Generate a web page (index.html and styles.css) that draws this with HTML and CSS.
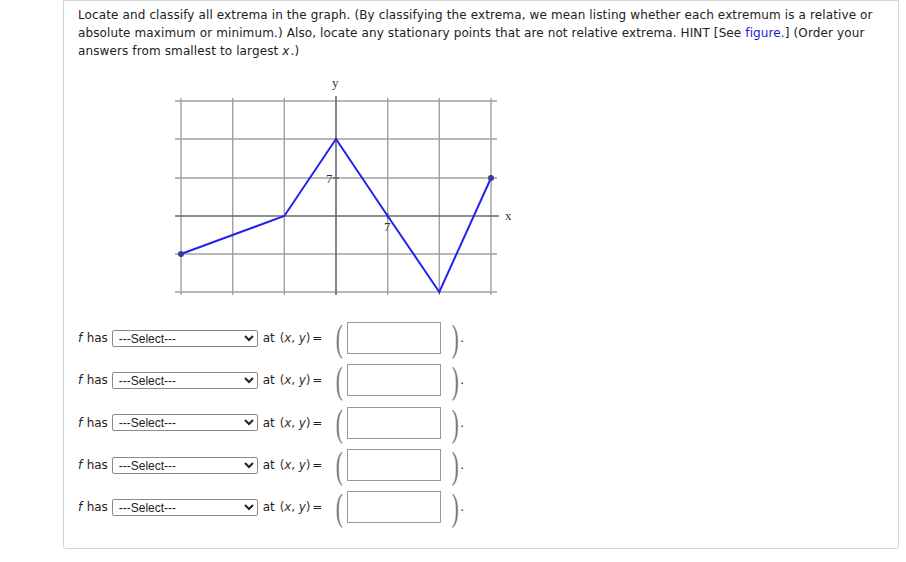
FILE: index.html
```html
<!DOCTYPE html>
<html lang="en">
<head>
    <meta charset="UTF-8">
    <title>Extrema</title>
    <link rel="stylesheet" href="styles.css">
</head>
<body>
    <div class="question">
        <p class="prompt">Locate and classify all extrema in the graph. (By classifying the extrema, we mean listing whether each extremum is a relative or absolute maximum or minimum.) Also, locate any stationary points that are not relative extrema. HINT [See <a href="#">figure.</a>] (Order your answers from smallest to largest <i>x</i>.)</p>

        <div class="graph">
            <svg width="360" height="226" viewBox="0 0 360 226">
                <g class="grid">
                    <line x1="21" y1="27" x2="21" y2="224"/>
                    <line x1="72.7" y1="27" x2="72.7" y2="224"/>
                    <line x1="124.3" y1="27" x2="124.3" y2="224"/>
                    <line x1="227.7" y1="27" x2="227.7" y2="224"/>
                    <line x1="279.3" y1="27" x2="279.3" y2="224"/>
                    <line x1="331" y1="27" x2="331" y2="224"/>
                    <line x1="15" y1="30" x2="337" y2="30"/>
                    <line x1="15" y1="68" x2="337" y2="68"/>
                    <line x1="15" y1="107" x2="337" y2="107"/>
                    <line x1="15" y1="183" x2="337" y2="183"/>
                    <line x1="15" y1="221" x2="337" y2="221"/>
                </g>
                <g class="axes">
                    <line x1="15" y1="145" x2="339" y2="145"/>
                    <line x1="176" y1="25" x2="176" y2="224"/>
                    <line x1="173" y1="107" x2="179" y2="107"/>
                    <line x1="227.7" y1="142" x2="227.7" y2="148"/>
                </g>
                <text class="axis-label" x="172" y="16">y</text>
                <text class="axis-label" x="345" y="149">x</text>
                <text class="tick" x="166" y="112">7</text>
                <text class="tick" x="224" y="160">7</text>
                <polyline class="curve" points="21,183 124.3,145 176,68 227.7,145 279.3,221 331,107"/>
                <circle class="end" cx="21" cy="183" r="3"/>
                <circle class="end" cx="331" cy="107" r="3"/>
            </svg>
        </div>

        <div class="answers">
            <div class="row">
                <span class="lead"><i>f</i> has</span>
                <select><option>---Select---</option></select>
                <span class="at">at</span>
                <span class="pair">(<i>x</i>, <i>y</i>)</span>
                <span class="eq">=</span>
                <span class="paren open">(</span>
                <input type="text">
                <span class="paren close">)</span>
                <span class="dot">.</span>
            </div>
            <div class="row">
                <span class="lead"><i>f</i> has</span>
                <select><option>---Select---</option></select>
                <span class="at">at</span>
                <span class="pair">(<i>x</i>, <i>y</i>)</span>
                <span class="eq">=</span>
                <span class="paren open">(</span>
                <input type="text">
                <span class="paren close">)</span>
                <span class="dot">.</span>
            </div>
            <div class="row">
                <span class="lead"><i>f</i> has</span>
                <select><option>---Select---</option></select>
                <span class="at">at</span>
                <span class="pair">(<i>x</i>, <i>y</i>)</span>
                <span class="eq">=</span>
                <span class="paren open">(</span>
                <input type="text">
                <span class="paren close">)</span>
                <span class="dot">.</span>
            </div>
            <div class="row">
                <span class="lead"><i>f</i> has</span>
                <select><option>---Select---</option></select>
                <span class="at">at</span>
                <span class="pair">(<i>x</i>, <i>y</i>)</span>
                <span class="eq">=</span>
                <span class="paren open">(</span>
                <input type="text">
                <span class="paren close">)</span>
                <span class="dot">.</span>
            </div>
            <div class="row">
                <span class="lead"><i>f</i> has</span>
                <select><option>---Select---</option></select>
                <span class="at">at</span>
                <span class="pair">(<i>x</i>, <i>y</i>)</span>
                <span class="eq">=</span>
                <span class="paren open">(</span>
                <input type="text">
                <span class="paren close">)</span>
                <span class="dot">.</span>
            </div>
        </div>
    </div>
</body>
</html>
```

FILE: styles.css
```css
body {
    margin: 0;
    background: #fff;
    font-family: "DejaVu Sans", Verdana, sans-serif;
    color: #222;
}
.question {
    margin-left: 63px;
    width: 836px;
    padding: 5px 0 19px 14px;
    box-sizing: border-box;
    border: 1px solid #d4d4d4;
    border-radius: 0 0 3px 3px;
    height: 549px;
}
.prompt {
    margin: 0;
    width: 805px;
    font-size: 12px;
    letter-spacing: 0.12px;
    line-height: 18px;
}
.prompt i {
    padding-right: 1px;
}
.prompt a {
    color: #1a1ad0;
    text-decoration: none;
}
.graph {
    margin: 11px 0 0 82px;
    height: 227px;
}
.graph svg {
    display: block;
}
.grid line {
    stroke: #a0a0a0;
    stroke-width: 1.4;
}
.axes line {
    stroke: #6a6a6a;
    stroke-width: 1.6;
}
.axis-label {
    font-family: "Liberation Serif", serif;
    font-size: 13px;
    fill: #333;
}
.tick {
    font-family: "Liberation Serif", serif;
    font-size: 13px;
    fill: #333;
}
.curve {
    fill: none;
    stroke: #2323f0;
    stroke-width: 2;
}
.end {
    fill: #3c3c9c;
}
.answers {
    margin-top: 19px;
}
.row {
    display: flex;
    align-items: center;
    height: 42.3px;
    font-size: 12px;
    letter-spacing: -0.1px;
}
.lead i {
    margin-right: 1px;
}
select {
    margin-left: 4px;
    width: 146px;
    height: 17px;
    padding: 0 0 0 2px;
    font-family: "Liberation Sans", Arial, sans-serif;
    font-size: 12px;
    color: #222;
    border: 1px solid #8a8a8a;
    border-radius: 2px;
    background: #fff;
}
.at {
    margin-left: 5px;
}
.pair {
    margin-left: 5px;
    color: #333;
}
.eq {
    margin-left: 2px;
}
.paren {
    display: inline-block;
    width: 8px;
    text-align: center;
    font-family: "Liberation Serif", serif;
    font-size: 38px;
    color: #777;
    transform: scaleX(0.55);
    line-height: 34px;
}
.open {
    margin-left: 12px;
}
input {
    margin-left: 5px;
    width: 94px;
    height: 32px;
    box-sizing: border-box;
    border: 1px solid #999;
    padding: 0;
}
.close {
    margin-left: 9px;
}
.dot {
    margin-left: 2px;
}
```
